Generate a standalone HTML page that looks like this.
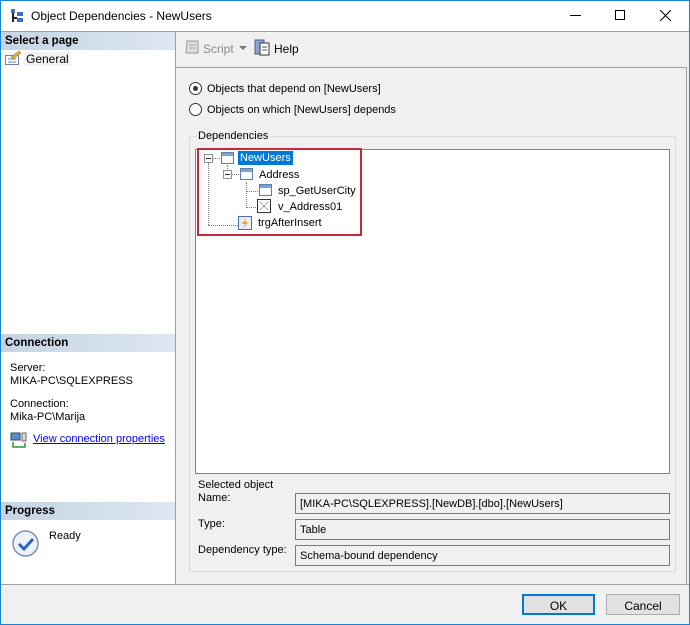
<!DOCTYPE html>
<html><head><style>
*{margin:0;padding:0;box-sizing:border-box}
body{width:690px;height:625px;position:relative;font-family:"Liberation Sans",sans-serif;font-size:11px;color:#000;background:#f0f0f0;overflow:hidden;letter-spacing:0}
.a{position:absolute}
.hdr{position:absolute;left:1px;width:174px;height:18px;background:linear-gradient(90deg,#c5d4e3,#dde7f1);font-weight:bold;padding:3px 4px;font-size:11.5px}
.fld{position:absolute;left:295px;width:375px;height:21px;border:1px solid #7a7a7a;background:#f0f0f0;padding:4px 4px}
.btn{position:absolute;height:21px;background:#e1e1e1;border:1px solid #adadad;text-align:center;padding-top:4px;font-size:12px}
.dot{position:absolute;border-color:#808080;border-style:dotted;border-width:0}
.ti{position:absolute;width:13px;height:12px;border:1px solid #5a7fae;background:linear-gradient(#7fa3d0 0 3px,#fff 3px)}
.pm{position:absolute;width:9px;height:9px;border:1px solid #909090;background:#fff}
.pm:after{content:"";position:absolute;left:1px;top:3px;width:5px;height:1px;background:#333}
</style></head><body>
<div class="a" style="left:0;top:0;width:690px;height:625px;border:1px solid #1883d7"></div>
<div class="a" style="left:1px;top:1px;width:688px;height:30px;background:#fff"></div>
<svg class="a" style="left:10px;top:8px" width="16" height="16"><rect x="1" y="1" width="4" height="4" fill="#3b70c0"/><rect x="2" y="5" width="2" height="9" fill="#222"/><rect x="4" y="9" width="3" height="2" fill="#222"/><rect x="7" y="4" width="6" height="4" fill="#3b70c0"/><rect x="7" y="10" width="6" height="4" fill="#3b70c0"/></svg>
<div class="a" style="left:31px;top:9px;font-size:12px">Object Dependencies - NewUsers</div>
<div class="a" style="left:570px;top:15px;width:11px;height:1px;background:#000"></div>
<div class="a" style="left:615px;top:10px;width:10px;height:10px;border:1px solid #000"></div>
<svg class="a" style="left:660px;top:10px" width="11" height="11"><path d="M0 0L11 11M11 0L0 11" stroke="#000"/></svg>
<div class="a" style="left:1px;top:31px;width:688px;height:1px;background:#a0a0a0"></div>
<div class="a" style="left:1px;top:32px;width:174px;height:552px;background:#fff"></div>
<div class="a" style="left:175px;top:32px;width:1px;height:553px;background:#a0a0a0"></div>
<div class="hdr" style="top:32px">Select a page</div>
<svg class="a" style="left:5px;top:51px" width="17" height="14"><rect x="0.5" y="4.5" width="13" height="9" fill="#fff" stroke="#6a86b0"/><path d="M3 8h8M3 11h8" stroke="#6a86b0"/><path d="M6 6L14 0l2 2-8 6z" fill="#e0b030" stroke="#806010" stroke-width=".5"/></svg>
<div class="a" style="left:24px;top:52px;padding:0 2px;background:#f3f3f3;font-size:12px">General</div>
<div class="hdr" style="top:334px">Connection</div>
<div class="a" style="left:10px;top:362px;line-height:13px">Server:<br>MIKA-PC\SQLEXPRESS</div>
<div class="a" style="left:10px;top:398px;line-height:13px">Connection:<br>Mika-PC\Marija</div>
<svg class="a" style="left:10px;top:432px" width="17" height="16"><rect x="1" y="1" width="9" height="7" fill="#5b8ed6" stroke="#345"/><rect x="12" y="1" width="4" height="8" fill="#ddd" stroke="#666"/><path d="M3 10v5h12v-4" stroke="#2a9a2a" fill="none" stroke-width="1.5"/></svg>
<div class="a" style="left:33px;top:433px;color:#0000ff;text-decoration:underline">View connection properties</div>
<div class="hdr" style="top:502px">Progress</div>
<svg class="a" style="left:12px;top:530px" width="28" height="28"><circle cx="13.5" cy="13.5" r="12.5" fill="#eef2fa" stroke="#7b8fb8" stroke-width="1.5"/><path d="M7 14l5 5 9-10" stroke="#2f62c8" stroke-width="3" fill="none"/></svg>
<div class="a" style="left:49px;top:530px">Ready</div>
<svg class="a" style="left:183px;top:39px" width="18" height="18"><path d="M4 2h11v12H3z" fill="#ddd" stroke="#999"/><path d="M6 6h7M6 9h7" stroke="#aaa"/></svg>
<div class="a" style="left:203px;top:42px;color:#8d8d8d;font-size:12px">Script</div>
<div class="a" style="left:239px;top:46px;border:4px solid transparent;border-top-color:#777;border-bottom:0"></div>
<svg class="a" style="left:254px;top:38px" width="17" height="19"><rect x="1" y="2" width="9" height="14" fill="#8fa5cc" stroke="#4a5e8a"/><rect x="6" y="5" width="9" height="12" fill="#fff" stroke="#333"/><path d="M8 9h5M8 12h5" stroke="#555"/></svg>
<div class="a" style="left:274px;top:42px;font-size:12px">Help</div>
<div class="a" style="left:176px;top:67px;width:511px;height:1px;background:#a0a0a0"></div>
<div class="a" style="left:686px;top:67px;width:1px;height:518px;background:#a0a0a0"></div>
<div class="a" style="left:189px;top:82px;width:13px;height:13px;border:1px solid #333;border-radius:50%;background:#fff"></div>
<div class="a" style="left:193px;top:86px;width:5px;height:5px;border-radius:50%;background:#333"></div>
<div class="a" style="left:207px;top:83px">Objects that depend on [NewUsers]</div>
<div class="a" style="left:189px;top:103px;width:13px;height:13px;border:1px solid #333;border-radius:50%;background:#fff"></div>
<div class="a" style="left:207px;top:104px">Objects on which [NewUsers] depends</div>
<div class="a" style="left:189px;top:136px;width:487px;height:436px;border:1px solid #dcdcdc"></div>
<div class="a" style="left:196px;top:130px;padding:0 2px;background:#f0f0f0">Dependencies</div>
<div class="a" style="left:195px;top:149px;width:475px;height:325px;background:#fff;border:1px solid #828282"></div>
<div class="dot" style="left:208px;top:163px;width:1px;height:62px;border-left-width:1px"></div>
<div class="dot" style="left:208px;top:225px;width:32px;height:1px;border-top-width:1px"></div>
<div class="dot" style="left:208px;top:158px;width:12px;height:1px;border-top-width:1px"></div>
<div class="dot" style="left:227px;top:165px;width:1px;height:10px;border-left-width:1px"></div>
<div class="dot" style="left:227px;top:174px;width:12px;height:1px;border-top-width:1px"></div>
<div class="dot" style="left:246px;top:182px;width:1px;height:26px;border-left-width:1px"></div>
<div class="dot" style="left:246px;top:191px;width:12px;height:1px;border-top-width:1px"></div>
<div class="dot" style="left:246px;top:207px;width:12px;height:1px;border-top-width:1px"></div>
<div class="pm" style="left:204px;top:154px"></div>
<div class="pm" style="left:223px;top:170px"></div>
<div class="ti" style="left:221px;top:152px"></div>
<div class="a" style="left:238px;top:151px;background:#0078d7;color:#fff;padding:1px 2px">NewUsers</div>
<div class="ti" style="left:240px;top:168px"></div>
<div class="a" style="left:259px;top:169px">Address</div>
<div class="ti" style="left:259px;top:184px"></div>
<div class="a" style="left:278px;top:185px">sp_GetUserCity</div>
<svg class="a" style="left:257px;top:199px" width="15" height="15"><rect x=".5" y=".5" width="13" height="13" fill="#fff" stroke="#333"/><path d="M3 3l8 8M11 3l-8 8" stroke="#666" stroke-dasharray="1 1"/></svg>
<div class="a" style="left:278px;top:201px">v_Address01</div>
<svg class="a" style="left:238px;top:216px" width="15" height="15"><rect x=".5" y=".5" width="13" height="13" fill="#e8eefc" stroke="#4a6fb0"/><path d="M8 2L4 8h3l-2 5 5-7H7z" fill="#f0a020"/></svg>
<div class="a" style="left:258px;top:217px">trgAfterInsert</div>
<div class="a" style="left:197px;top:148px;width:165px;height:88px;border:2px solid #c8283c"></div>
<div class="a" style="left:198px;top:479px;line-height:13px">Selected object<br>Name:</div>
<div class="fld" style="top:493px">[MIKA-PC\SQLEXPRESS].[NewDB].[dbo].[NewUsers]</div>
<div class="a" style="left:198px;top:518px">Type:</div>
<div class="fld" style="top:519px">Table</div>
<div class="a" style="left:198px;top:544px">Dependency type:</div>
<div class="fld" style="top:545px">Schema-bound dependency</div>
<div class="a" style="left:1px;top:584px;width:688px;height:1px;background:#a0a0a0"></div>
<div class="btn" style="left:522px;top:594px;width:73px;border:2px solid #0078d7;padding-top:3px">OK</div>
<div class="btn" style="left:606px;top:594px;width:74px">Cancel</div>
</body></html>
